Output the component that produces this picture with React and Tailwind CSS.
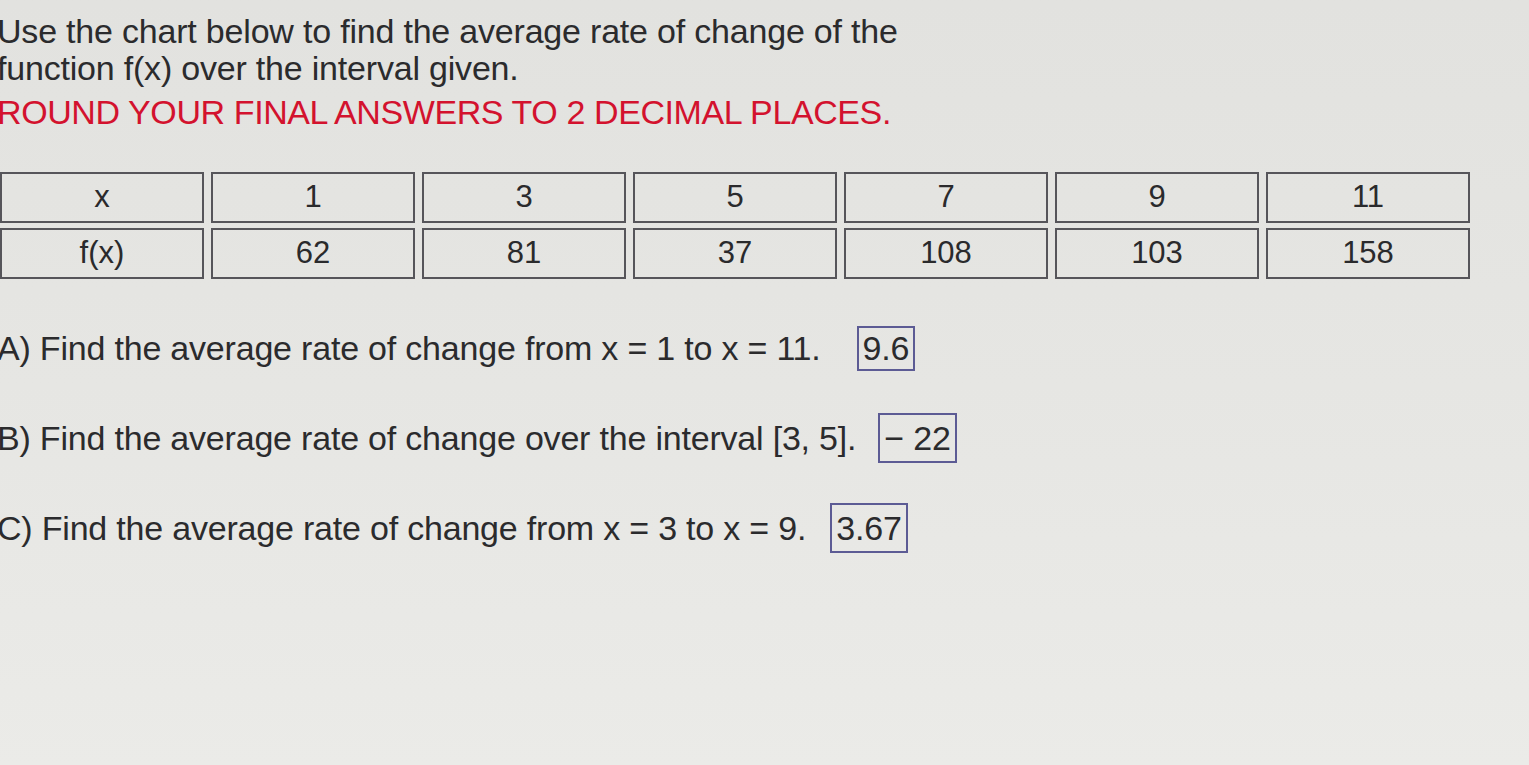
import React from 'react';

const xs = ['x', '1', '3', '5', '7', '9', '11'];
const fx = ['f(x)', '62', '81', '37', '108', '103', '158'];

const questions = [
  { text: 'A) Find the average rate of change from x = 1 to x = 11.', answer: '9.6', gap: 'ml-[36px]', h: 'h-[45px]' },
  { text: 'B) Find the average rate of change over the interval [3, 5].', answer: '− 22', gap: 'ml-[22px]', h: 'h-[50px]' },
  { text: 'C) Find the average rate of change from x = 3 to x = 9.', answer: '3.67', gap: 'ml-[24px]', h: 'h-[50px]' },
];

function Cell({ children }) {
  return (
    <div className="h-[51px] border-2 border-[#56555a] flex items-center justify-center text-[31px] text-[#2a2a2c]">
      {children}
    </div>
  );
}

export default function App() {
  return (
    <div
      className="w-[1529px] h-[765px] overflow-hidden bg-gradient-to-b from-[#e2e2df] via-[#e6e6e3] to-[#ebebe8] text-[#2b2b2d]"
      style={{ fontFamily: '"Liberation Sans", Arial, sans-serif' }}
    >
      <div className="-ml-[3px] pt-[13px]">
        {/* Instructions */}
        <p className="text-[34px] leading-[37px] tracking-[-0.2px]">
          Use the chart below to find the average rate of change of the
          <br />
          function f(x) over the interval given.
        </p>
        <p className="mt-[6px] text-[34px] leading-[38px] text-[#d3122e] tracking-[-0.4px]">
          ROUND YOUR FINAL ANSWERS TO 2 DECIMAL PLACES.
        </p>

        {/* Chart */}
        <div className="mt-[41px] ml-[3px] grid grid-cols-[repeat(7,204px)] gap-x-[7px] gap-y-[5px]">
          {xs.map((v, i) => (
            <Cell key={'x' + i}>{v}</Cell>
          ))}
          {fx.map((v, i) => (
            <Cell key={'f' + i}>{v}</Cell>
          ))}
        </div>

        {/* Questions */}
        <div className="mt-[44px] flex flex-col gap-[40px]">
          {questions.map(q => (
            <div key={q.answer} className="flex items-center h-[50px] text-[34px] tracking-[-0.2px]">
              <span>{q.text}</span>
              <span className={`${q.gap} ${q.h} px-[4px] border-2 border-[#5c5b94] flex items-center`}>
                {q.answer}
              </span>
            </div>
          ))}
        </div>
      </div>
    </div>
  );
}
